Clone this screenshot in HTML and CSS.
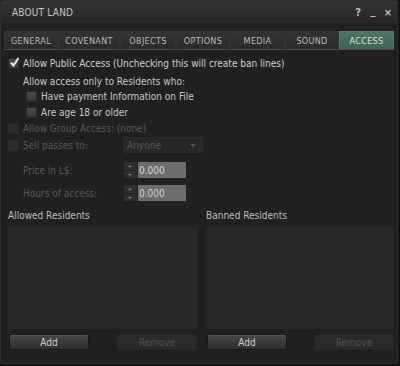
FILE: index.html
```html
<!DOCTYPE html>
<html>
<head>
<meta charset="utf-8">
<link rel="stylesheet" href="styles.css">
</head>
<body>
<div class="window">
  <div class="titlebar">
    <span class="title">ABOUT LAND</span>
    <span class="controls"><span class="ctl">?</span><span class="ctl min">_</span><span class="ctl">×</span></span>
  </div>
  <div class="tabs">
    <div class="tab w54">GENERAL</div>
    <div class="tab w62">COVENANT</div>
    <div class="tab w56">OBJECTS</div>
    <div class="tab w54">OPTIONS</div>
    <div class="tab w55">MEDIA</div>
    <div class="tab w54">SOUND</div>
    <div class="tab w55 active">ACCESS</div>
  </div>
  <div class="content">
    <div class="row r1"><span class="cb checked"><svg width="11" height="11" viewBox="0 0 11 11"><path d="M2 5.5 L4.5 8.5 L9.5 1" fill="none" stroke="#e8e8e8" stroke-width="2"/></svg></span><span class="lbl">Allow Public Access (Unchecking this will create ban lines)</span></div>
    <div class="row r2 ind1"><span class="lbl">Allow access only to Residents who:</span></div>
    <div class="row r3 ind2"><span class="cb"></span><span class="lbl">Have payment Information on File</span></div>
    <div class="row r4 ind2"><span class="cb"></span><span class="lbl">Are age 18 or older</span></div>
    <div class="row r5 dis"><span class="cb off"></span><span class="lbl">Allow Group Access: (none)</span></div>
    <div class="row r6 dis"><span class="cb off"></span><span class="lbl w100">Sell passes to:</span><span class="dropdown"><span>Anyone</span><span class="arrow"></span></span></div>
    <div class="row r7 dis ind1"><span class="lbl w101">Price in L$:</span><span class="spin"><span class="up"></span><span class="dn"></span></span><span class="input">0.000</span></div>
    <div class="row r8 dis ind1"><span class="lbl w101">Hours of access:</span><span class="spin"><span class="up"></span><span class="dn"></span></span><span class="input">0.000</span></div>
    <div class="lists">
      <div class="col left">
        <div class="head">Allowed Residents</div>
        <div class="list"></div>
        <div class="btns"><span class="btn">Add</span><span class="btn disabled">Remove</span></div>
      </div>
      <div class="col right">
        <div class="head">Banned Residents</div>
        <div class="list"></div>
        <div class="btns"><span class="btn">Add</span><span class="btn disabled">Remove</span></div>
      </div>
    </div>
  </div>
</div>
</body>
</html>
```
FILE: styles.css
```css
* { box-sizing: border-box; }
html, body { margin: 0; padding: 0; background: #141414; }
body { width: 400px; height: 366px; overflow: hidden; font-family: "DejaVu Sans Condensed", "DejaVu Sans", sans-serif; font-stretch: condensed; font-size: 10px; color: #c8c8c8; }
.window { width: 398px; height: 364px; background: #202020; border: 1px solid #2e2e2e; border-radius: 2px; display: flex; flex-direction: column; }
.titlebar { height: 22px; background: linear-gradient(#343434, #262626); display: flex; align-items: center; justify-content: space-between; padding: 0 4px 0 11px; }
.title { font-size: 10px; color: #c4c4c4; letter-spacing: 0.2px; }
.controls { display: flex; gap: 5px; align-items: center; color: #bfbfbf; font-weight: bold; font-size: 11px; }
.ctl { width: 10px; text-align: center; }
.ctl.min { position: relative; top: -2px; }
.tabs { display: flex; margin: 8px 3px 0 3px; height: 19px; border-bottom: 1px solid #4a4a4a; }
.tab { height: 18px; border: 1px solid #333; border-bottom: none; background: linear-gradient(#333, #2a2a2a); color: #b8b8b8; font-size: 9px; display: flex; align-items: center; justify-content: center; letter-spacing: 0.3px; }
.tab.active { background: linear-gradient(#4e7463, #3f6354); color: #d8e0dc; border-color: #56796a; }
.w54 { width: 54px; } .w55 { width: 55px; } .w56 { width: 56px; } .w62 { width: 62px; }
.content { flex: 1; display: flex; flex-direction: column; padding: 0 3px 0 7px; }
.row { display: flex; align-items: center; height: 16px; }
.r1 { margin-top: 6px; height: 14px; color: #d0d0d0; }
.r2 { margin-top: 4px; height: 14px; }
.r3 { margin-top: 0; }
.r4 { margin-top: 0; }
.r5 { margin-top: 0; }
.r6 { margin-top: 0; height: 18px; }
.r7 { margin-top: 8px; }
.r8 { margin-top: 7px; }
.ind1 { padding-left: 15px; }
.ind2 { padding-left: 18px; }
.cb { width: 11px; height: 11px; margin-right: 4px; background: linear-gradient(#4a4a4a, #383838); border: 1px solid #2a2a2a; border-radius: 1px; display: inline-flex; position: relative; }
.cb svg { position: absolute; left: 0; top: -2px; }
.cb.off { background: #2c2c2c; border-color: #282828; }
.dis .lbl { color: #585858; }
.w100 { width: 100px; }
.w101 { width: 101px; }
.dropdown { width: 80px; height: 16px; background: #272727; border: 1px solid #2c2c2c; border-radius: 2px; display: flex; align-items: center; justify-content: space-between; padding: 0 6px 0 3px; color: #555; }
.arrow { width: 0; height: 0; border-left: 3px solid transparent; border-right: 3px solid transparent; border-top: 3px solid #555; }
.spin { width: 13px; height: 16px; margin-left: 0; display: flex; flex-direction: column; gap: 1px; }
.spin .up, .spin .dn { flex: 1; background: #2e2e2e; position: relative; }
.spin .up::after { content: ""; position: absolute; left: 4px; top: 3px; border-left: 2px solid transparent; border-right: 2px solid transparent; border-bottom: 2px solid #777; }
.spin .dn::after { content: ""; position: absolute; left: 4px; top: 3px; border-left: 2px solid transparent; border-right: 2px solid transparent; border-top: 2px solid #777; }
.input { width: 48px; height: 16px; margin-left: 1px; background: #6c6c6c; color: #d4d4d4; display: flex; align-items: center; padding-left: 1px; }
.lists { display: flex; gap: 9px; margin-top: 7px; flex: 1; }
.col { display: flex; flex-direction: column; }
.col.left { width: 189px; }
.col.right { width: 188px; }
.head { height: 19px; line-height: 16px; color: #bdbdbd; }
.list { height: 102px; background: #282828; }
.btns { display: flex; justify-content: space-between; margin-top: 5px; padding-left: 1px; }
.btn { width: 80px; height: 16px; border: 1px solid #1a1a1a; border-radius: 2px; background: linear-gradient(#464646, #2f2f2f); color: #cfcfcf; display: flex; align-items: center; justify-content: center; box-shadow: inset 0 1px 0 #555; }
.btn.disabled { background: #2a2a2a; color: #505050; border-color: #262626; box-shadow: none; }
```
